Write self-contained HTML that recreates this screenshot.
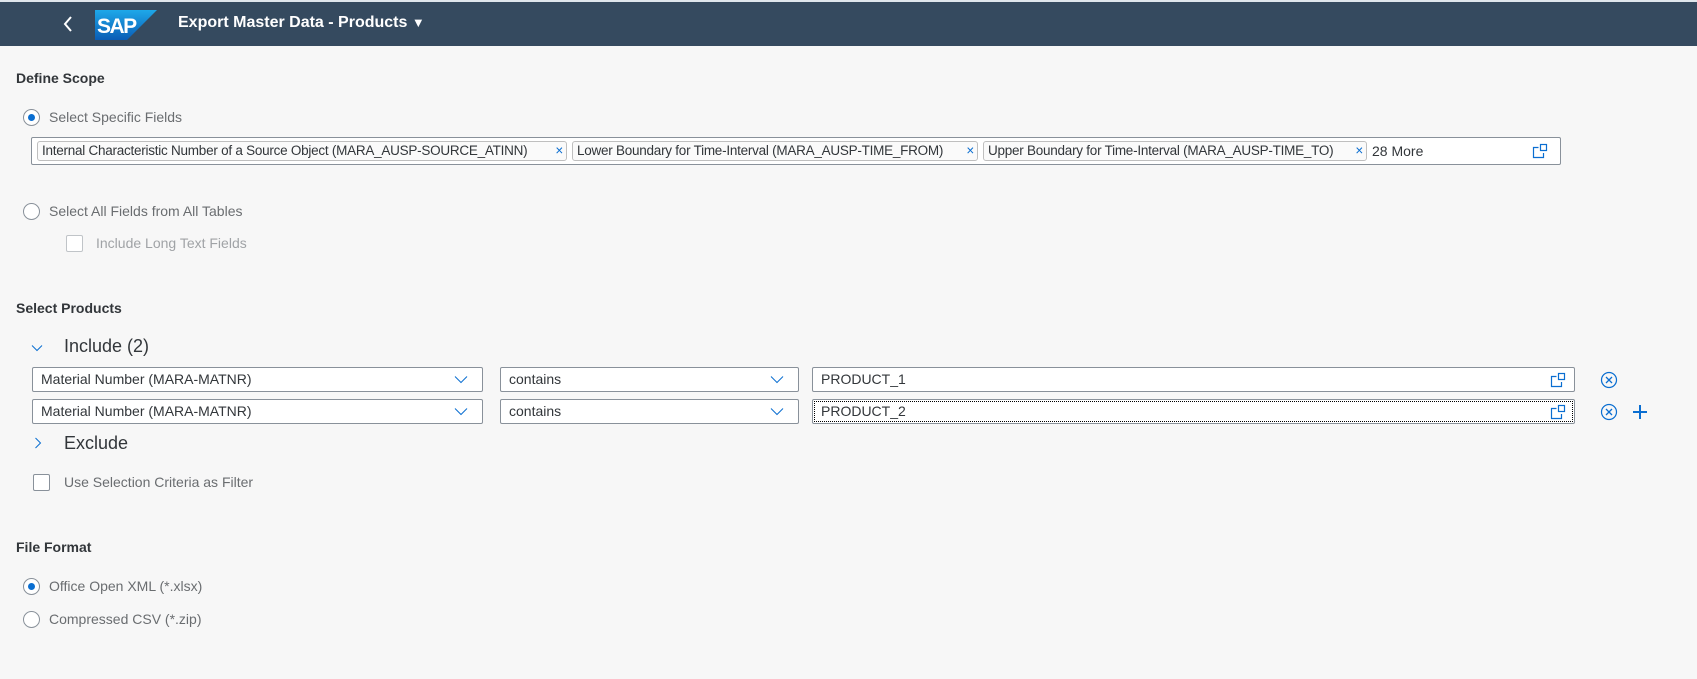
<!DOCTYPE html>
<html><head><style>
*{box-sizing:border-box;margin:0;padding:0}
body{width:1697px;height:679px;background:#f7f7f7;font-family:"Liberation Sans",Arial,sans-serif;position:relative;overflow:hidden;color:#32363a}
.a{position:absolute}
.hdr{left:0;top:0;width:1697px;height:46px;background:#354a5f;border-top:2px solid #dfe6ec}
.h{font-weight:bold;font-size:14px;color:#32363a}
.t{font-size:14px;color:#6a6d70}
.radio{width:17px;height:17px;border:1px solid #89919a;border-radius:50%;background:#fff}
.radio.on::after{content:"";position:absolute;left:4px;top:4px;width:7px;height:7px;border-radius:50%;background:#0a6ed1}
.cb{width:17px;height:17px;border:1px solid #89919a;border-radius:2px;background:#fff}
.box{background:#fff;border:1px solid #89919a;border-radius:2px;height:25px;font-size:14px;color:#32363a;line-height:23px;padding-left:8px}
.tok{top:3px;height:20px;border:1px solid #bfbfbf;border-radius:3px;background:#fafafa;font-size:13.5px;letter-spacing:-0.25px;line-height:18px;padding:0 16px 0 4px;color:#32363a;white-space:nowrap;overflow:hidden}
.tok b{position:absolute;right:3px;top:0;color:#0a6ed1;font-weight:normal}
.chev{position:absolute;right:14px;top:7px}
</style></head><body>
<div class="a hdr">
<svg class="a" style="left:62px;top:13px" width="12" height="18"><path d="M9 2 L3 9 L9 16" stroke="#fff" stroke-width="2" fill="none"/></svg>
<svg class="a" style="left:95px;top:8px" width="62" height="30"><defs><linearGradient id="g" x1="0" y1="0" x2="0" y2="1"><stop offset="0" stop-color="#1ea8e9"/><stop offset="1" stop-color="#0a5cb5"/></linearGradient></defs><path d="M0 0H62L32 30H0Z" fill="url(#g)"/><text x="2" y="23" font-family="Liberation Sans" font-weight="bold" font-size="21" fill="#fff" letter-spacing="-1.5">SAP</text></svg>
<div class="a" style="left:178px;top:12px;color:#fff;font-weight:bold;font-size:16px">Export Master Data - Products <span style="font-size:13px">▼</span></div>
</div>
<div class="a h" style="left:16px;top:70px">Define Scope</div>
<div class="a radio on" style="left:23px;top:109px"></div>
<div class="a t" style="left:49px;top:109px">Select Specific Fields</div>
<div class="a box" style="left:31px;top:137px;width:1530px;height:28px;padding:0">
<div class="a tok" style="left:5px;width:530px">Internal Characteristic Number of a Source Object (MARA_AUSP-SOURCE_ATINN)<b>×</b></div>
<div class="a tok" style="left:540px;width:406px">Lower Boundary for Time-Interval (MARA_AUSP-TIME_FROM)<b>×</b></div>
<div class="a tok" style="left:951px;width:384px">Upper Boundary for Time-Interval (MARA_AUSP-TIME_TO)<b>×</b></div>
<div class="a" style="left:1340px;top:4px;font-size:14px;line-height:18px">28 More</div>
<svg class="a" style="right:12px;top:5px" width="16" height="16"><rect x="8.5" y="1.5" width="6" height="6" stroke="#0a6ed1" fill="none" stroke-width="1.2"/><path d="M6.5 4.5H1.5V14.5H11.5V10" stroke="#0a6ed1" fill="none" stroke-width="1.2"/></svg>
</div>
<div class="a radio" style="left:23px;top:203px"></div>
<div class="a t" style="left:49px;top:203px">Select All Fields from All Tables</div>
<div class="a cb" style="left:66px;top:235px;border-color:#c0c4c8"></div>
<div class="a t" style="left:96px;top:235px;color:#a0a3a6">Include Long Text Fields</div>
<div class="a h" style="left:16px;top:300px">Select Products</div>
<svg class="a" style="left:31px;top:344px" width="12" height="8"><path d="M1 1.5L6 6.5L11 1.5" stroke="#0a6ed1" fill="none" stroke-width="1"/></svg>
<div class="a" style="left:64px;top:336px;font-size:18px;color:#32363a">Include (2)</div>
<div class="a box" style="left:32px;top:367px;width:451px">Material Number (MARA-MATNR)<svg class="chev" width="14" height="9"><path d="M1 1.5L7 7.5L13 1.5" stroke="#0a6ed1" fill="none" stroke-width="1"/></svg></div>
<div class="a box" style="left:500px;top:367px;width:299px">contains<svg class="chev" width="14" height="9"><path d="M1 1.5L7 7.5L13 1.5" stroke="#0a6ed1" fill="none" stroke-width="1"/></svg></div>
<div class="a box" style="left:812px;top:367px;width:763px">PRODUCT_1<svg class="a" style="right:8px;top:4px" width="16" height="16"><rect x="8.5" y="1.5" width="6" height="6" stroke="#0a6ed1" fill="none" stroke-width="1.2"/><path d="M6.5 4.5H1.5V14.5H11.5V10" stroke="#0a6ed1" fill="none" stroke-width="1.2"/></svg></div>
<div class="a box" style="left:32px;top:399px;width:451px">Material Number (MARA-MATNR)<svg class="chev" width="14" height="9"><path d="M1 1.5L7 7.5L13 1.5" stroke="#0a6ed1" fill="none" stroke-width="1"/></svg></div>
<div class="a box" style="left:500px;top:399px;width:299px">contains<svg class="chev" width="14" height="9"><path d="M1 1.5L7 7.5L13 1.5" stroke="#0a6ed1" fill="none" stroke-width="1"/></svg></div>
<div class="a box" style="left:812px;top:399px;width:763px;outline:1px dotted #000;outline-offset:-3px">PRODUCT_2<svg class="a" style="right:8px;top:4px" width="16" height="16"><rect x="8.5" y="1.5" width="6" height="6" stroke="#0a6ed1" fill="none" stroke-width="1.2"/><path d="M6.5 4.5H1.5V14.5H11.5V10" stroke="#0a6ed1" fill="none" stroke-width="1.2"/></svg></div>
<svg class="a" style="left:1600px;top:371px" width="18" height="18"><circle cx="9" cy="9" r="7.5" stroke="#0a6ed1" fill="none" stroke-width="1.2"/><path d="M6 6L12 12M12 6L6 12" stroke="#0a6ed1" stroke-width="1.3"/></svg>
<svg class="a" style="left:1600px;top:403px" width="18" height="18"><circle cx="9" cy="9" r="7.5" stroke="#0a6ed1" fill="none" stroke-width="1.2"/><path d="M6 6L12 12M12 6L6 12" stroke="#0a6ed1" stroke-width="1.3"/></svg>
<svg class="a" style="left:1632px;top:404px" width="16" height="16"><path d="M8 1V15M1 8H15" stroke="#0a6ed1" stroke-width="2"/></svg>
<svg class="a" style="left:34px;top:437px" width="8" height="12"><path d="M1.5 1L6.5 6L1.5 11" stroke="#0a6ed1" fill="none" stroke-width="1"/></svg>
<div class="a" style="left:64px;top:433px;font-size:18px;color:#32363a">Exclude</div>
<div class="a cb" style="left:33px;top:474px"></div>
<div class="a t" style="left:64px;top:474px">Use Selection Criteria as Filter</div>
<div class="a h" style="left:16px;top:539px">File Format</div>
<div class="a radio on" style="left:23px;top:578px"></div>
<div class="a t" style="left:49px;top:578px">Office Open XML (*.xlsx)</div>
<div class="a radio" style="left:23px;top:611px"></div>
<div class="a t" style="left:49px;top:611px">Compressed CSV (*.zip)</div>
</body></html>
